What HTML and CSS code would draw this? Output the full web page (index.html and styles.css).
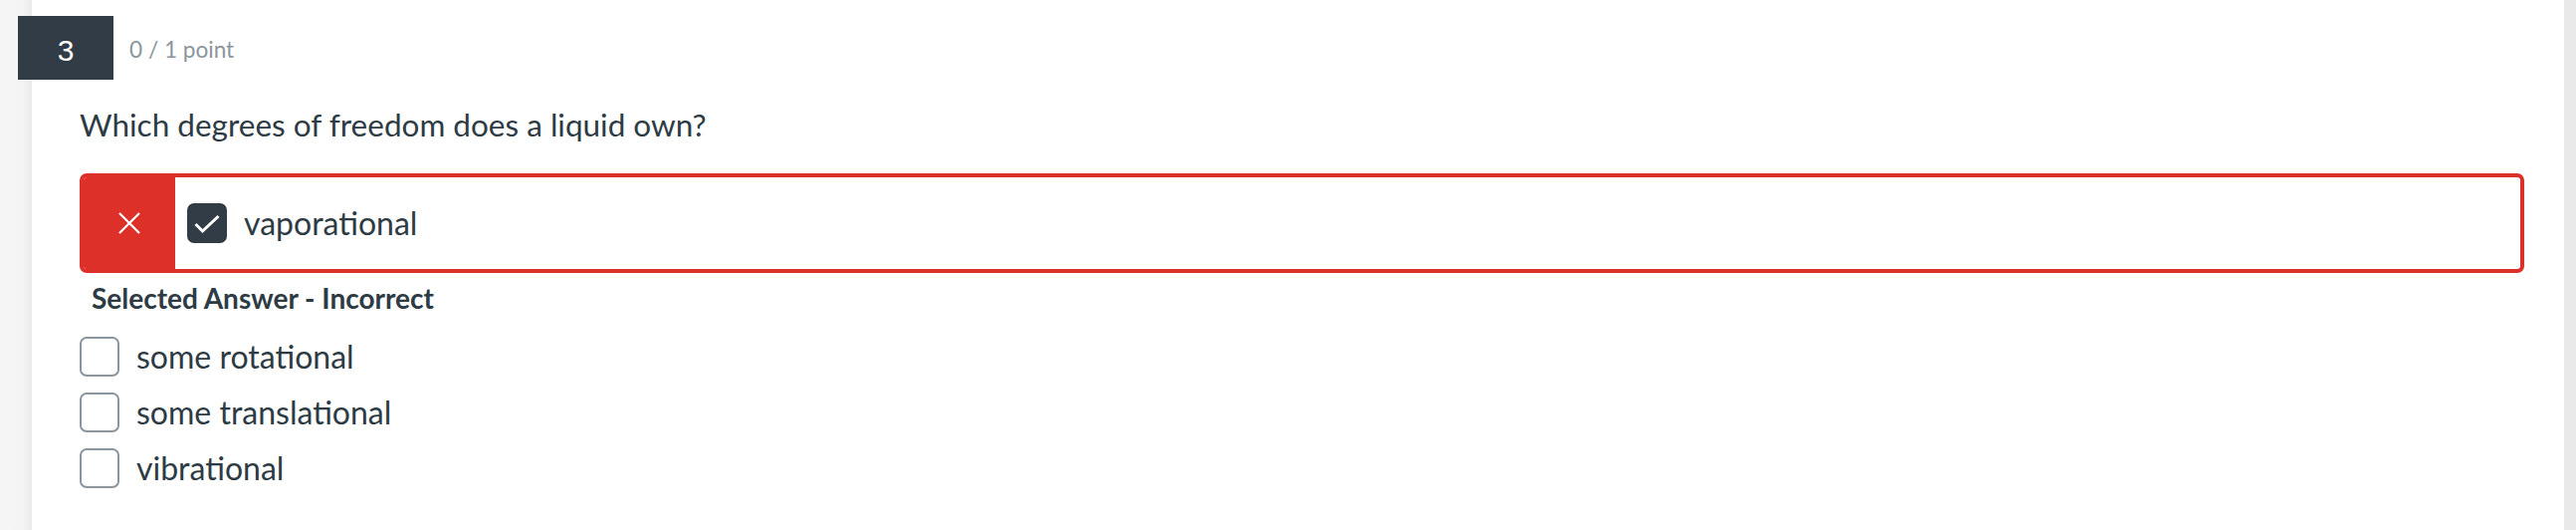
FILE: index.html
```html
<!DOCTYPE html>
<html lang="en">
<head>
<meta charset="utf-8">
<title>Quiz question 3</title>
<link rel="stylesheet" href="styles.css">
</head>
<body>
<div class="page">
  <div class="gutter"></div>
  <main class="card">
    <div class="header">
      <div class="badge">3</div>
      <div class="points">0 / 1 point</div>
    </div>
    <div class="question">Which degrees of freedom does a liquid own?</div>
    <div class="answer answer-wrong">
      <div class="flag">
        <svg class="x-icon" width="22" height="22" viewBox="0 0 22 22" aria-hidden="true">
          <path d="M1 1 L21 21 M21 1 L1 21" stroke="#ffffff" stroke-width="2.2" fill="none"/>
        </svg>
      </div>
      <div class="check check-on">
        <svg width="40" height="40" viewBox="0 0 40 40" aria-hidden="true">
          <path d="M8.5 21 L15.5 28 L31.5 13" stroke="#ffffff" stroke-width="3" fill="none" stroke-linecap="butt" stroke-linejoin="miter"/>
        </svg>
      </div>
      <span class="answer-text">vaporational</span>
    </div>
    <div class="status">Selected Answer - Incorrect</div>
    <ul class="options">
      <li class="option"><span class="check check-off"></span><span class="answer-text">some rotational</span></li>
      <li class="option"><span class="check check-off"></span><span class="answer-text">some translational</span></li>
      <li class="option"><span class="check check-off"></span><span class="answer-text">vibrational</span></li>
    </ul>
  </main>
  <div class="rail"></div>
</div>
</body>
</html>
```

FILE: styles.css
```css
html, body {
  margin: 0;
  padding: 0;
  height: 100%;
}

body {
  font-family: Lato, "Noto Sans", "Liberation Sans", sans-serif;
  color: #2d3b45;
  background: #f5f5f5;
  overflow: hidden;
}

.page {
  display: flex;
  height: 532px;
}

.gutter {
  width: 32px;
  flex: none;
  background: linear-gradient(to right, #f5f5f5 0, #f4f4f4 70%, #ebebeb 100%);
}

.card {
  flex: 1;
  background: #ffffff;
  padding: 16px 40px 0 48px;
  min-width: 0;
}

.rail {
  width: 12px;
  flex: none;
  background: #e9e9e9;
}

.header {
  display: flex;
  align-items: center;
  gap: 16px;
  margin-left: -62px;
  height: 64px;
}

.badge {
  width: 96px;
  height: 64px;
  box-sizing: border-box;
  padding-top: 5px;
  background: #323c46;
  color: #ffffff;
  font-family: "Liberation Sans", Arial, sans-serif;
  font-size: 30px;
  display: flex;
  align-items: center;
  justify-content: center;
}

.points {
  font-size: 22.6px;
  line-height: 26px;
  color: #8a959d;
  padding-top: 3px;
}

.question {
  margin-top: 25px;
  font-size: 31.5px;
  line-height: 40px;
}

.answer {
  margin-top: 29px;
  height: 100px;
  box-sizing: border-box;
  border: 4px solid #dc3028;
  border-radius: 7px;
  display: flex;
  align-items: center;
  overflow: hidden;
}

.flag {
  width: 92px;
  align-self: stretch;
  background: #dc3028;
  display: flex;
  align-items: center;
  justify-content: center;
  flex: none;
}

.x-icon {
  display: block;
}

.answer .check {
  margin-left: 12px;
}

.check {
  width: 40px;
  height: 40px;
  box-sizing: border-box;
  border-radius: 7px;
  flex: none;
  display: block;
}

.check svg {
  display: block;
}

.check-on {
  background: #323c46;
}

.check-off {
  border: 2px solid #8b959e;
  background: #ffffff;
}

.answer-text {
  font-size: 32px;
  line-height: 40px;
  margin-left: 17px;
}

.status {
  margin-top: 9px;
  margin-left: 12px;
  font-size: 28px;
  line-height: 32px;
  font-weight: 700;
}

.options {
  list-style: none;
  margin: 23px 0 0 0;
  padding: 0;
  display: flex;
  flex-direction: column;
  gap: 16px;
}

.option {
  display: flex;
  align-items: center;
  height: 40px;
}
```
